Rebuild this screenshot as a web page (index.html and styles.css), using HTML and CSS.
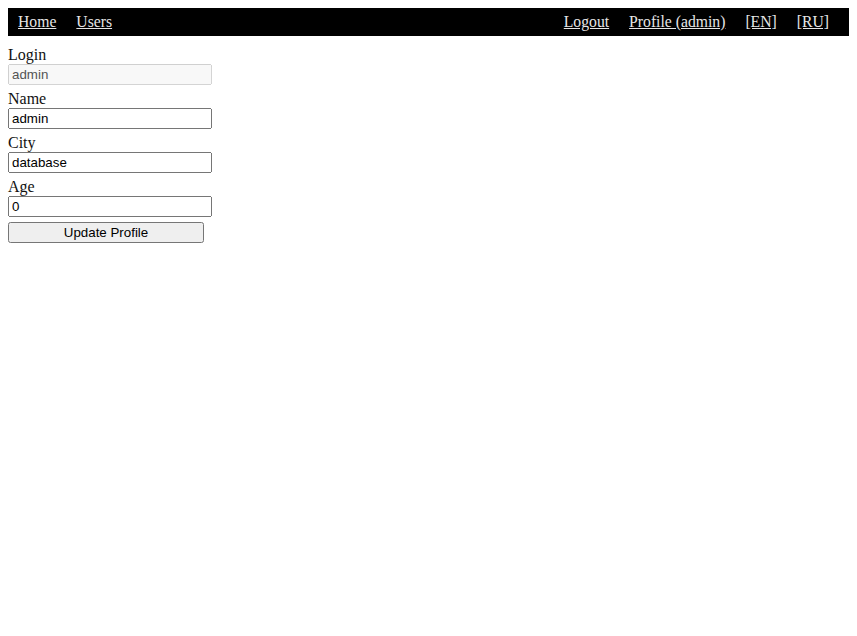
FILE: index.html
```html
<!DOCTYPE html>
<html>
<head>
<meta charset="utf-8">
<link rel="stylesheet" href="styles.css">
</head>
<body>
<nav class="topbar">
  <div class="nav-group">
    <a href="#">Home</a>
    <a href="#">Users</a>
  </div>
  <div class="nav-group">
    <a href="#">Logout</a>
    <a href="#">Profile (admin)</a>
    <a href="#">[EN]</a>
    <a href="#">[RU]</a>
  </div>
</nav>
<form class="profile-form">
  <label class="field-label">Login</label>
  <input class="field-input" type="text" value="admin" disabled>
  <label class="field-label">Name</label>
  <input class="field-input" type="text" value="admin">
  <label class="field-label">City</label>
  <input class="field-input" type="text" value="database">
  <label class="field-label">Age</label>
  <input class="field-input" type="text" value="0">
  <button class="submit-btn" type="button">Update Profile</button>
</form>
</body>
</html>
```
FILE: styles.css
```css
body {
  margin: 8px;
  font-family: "Liberation Serif", "Times New Roman", serif;
  font-size: 16px;
  color: #111;
  background: #fff;
}
.topbar {
  display: flex;
  justify-content: space-between;
  align-items: center;
  background: #000;
  height: 28px;
  padding: 0 20px 0 10px;
}
.nav-group {
  display: flex;
  gap: 20px;
}
.nav-group a {
  color: #e6e6e6;
  text-decoration: underline;
  font-size: 15.7px;
  line-height: 18px;
}
.profile-form {
  display: flex;
  flex-direction: column;
  align-items: flex-start;
  margin-top: 10px;
}
.field-label {
  display: block;
  line-height: 18px;
}
.field-input {
  box-sizing: border-box;
  width: 204px;
  height: 21px;
  margin: 0 0 5px 0;
  font-family: "Liberation Sans", Arial, sans-serif;
  font-size: 13.333px;
}
.submit-btn {
  box-sizing: border-box;
  width: 196px;
  height: 21px;
  margin: 0;
  font-family: "Liberation Sans", Arial, sans-serif;
  font-size: 13.333px;
}
```
